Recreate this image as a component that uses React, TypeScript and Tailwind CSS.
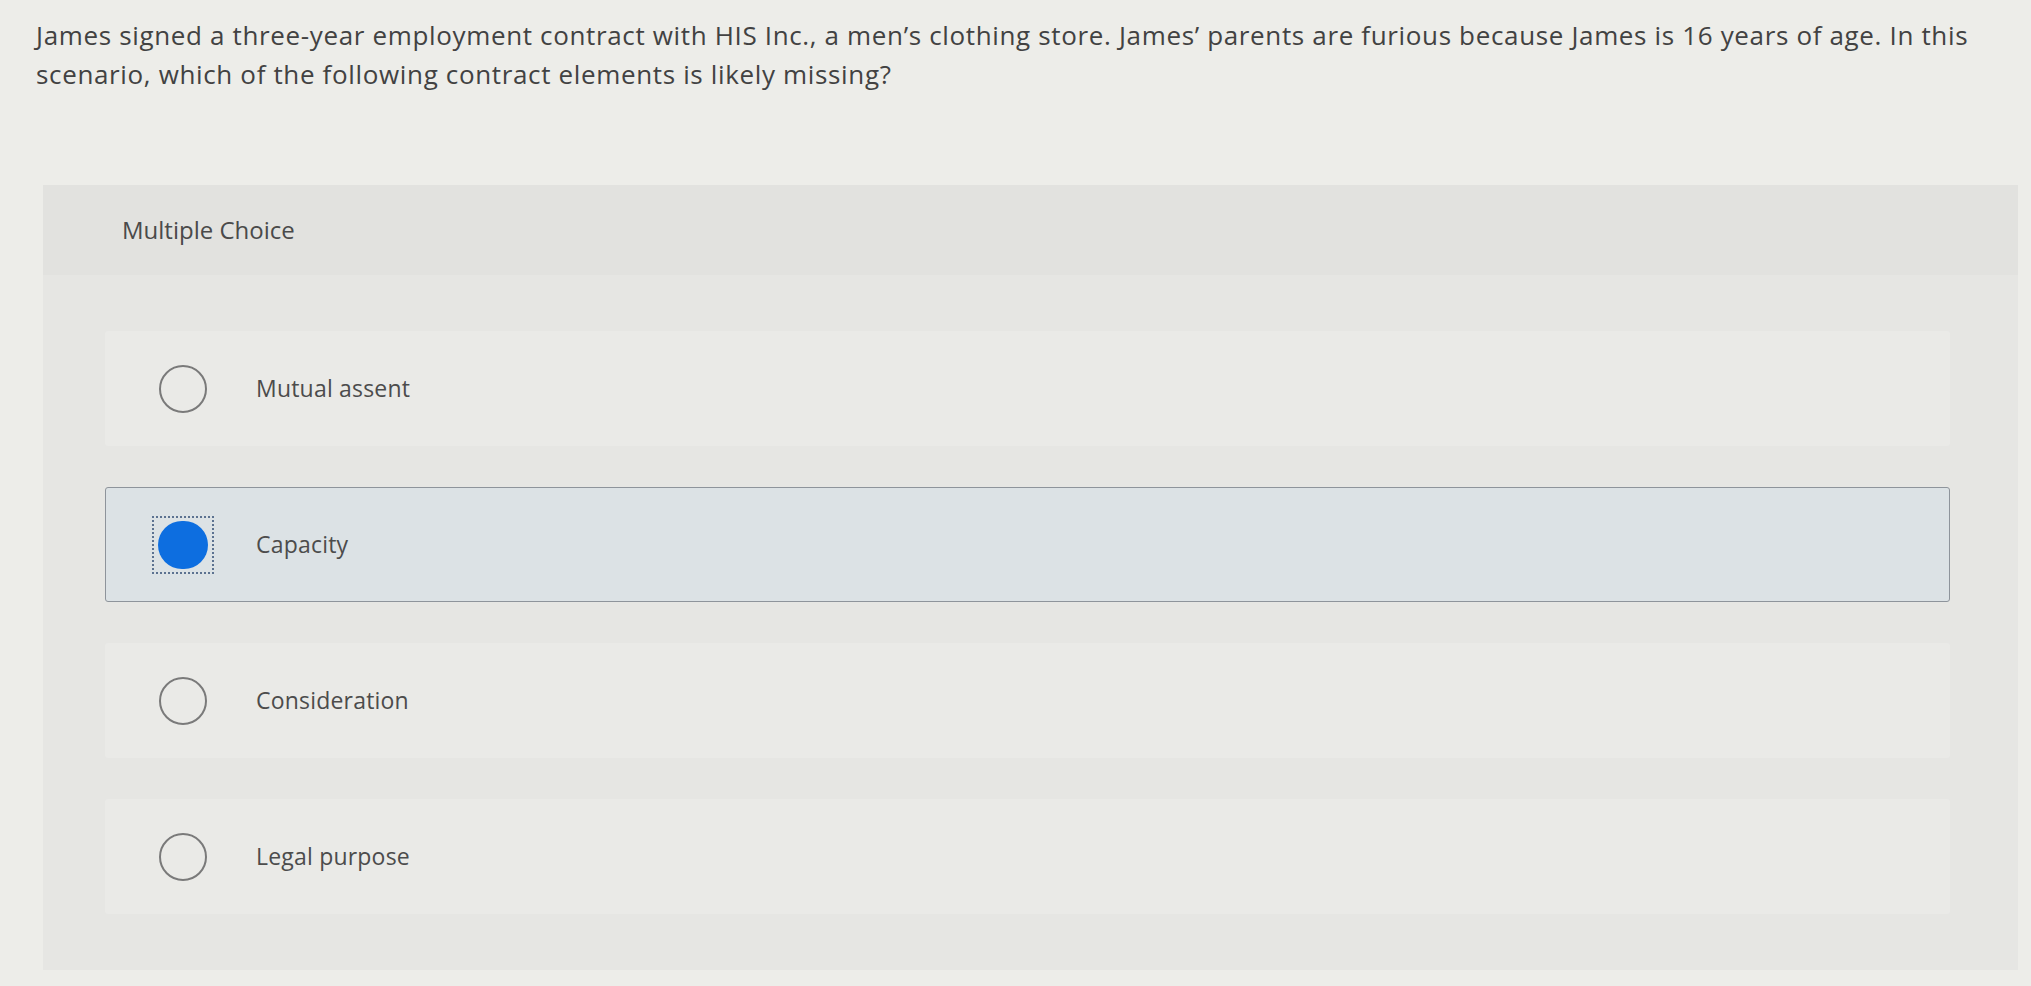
import React from 'react'

const FONT = { fontFamily: '"Open Sans", "Liberation Sans", sans-serif' }

const OPTIONS = [
  { id: 'a', label: 'Mutual assent' },
  { id: 'b', label: 'Capacity' },
  { id: 'c', label: 'Consideration' },
  { id: 'd', label: 'Legal purpose' },
]

export default function App() {
  const selected = 'b'

  return (
    <div className="w-[2031px] h-[986px] overflow-hidden bg-[#edede9] text-[#474747]" style={FONT}>

      {/* question */}
      <div className="pl-[36px] pt-[16px] pr-[20px] text-[26px] leading-[39px] tracking-[0.65px] text-[#424242] whitespace-nowrap">
        James signed a three-year employment contract with HIS Inc., a men’s clothing store. James’ parents are furious because James is 16 years of age. In this
        <br />
        scenario, which of the following contract elements is likely missing?
      </div>

      {/* answer panel */}
      <div className="mt-[91px] ml-[43px] w-[1975px] bg-[#e6e6e3]">
        <div className="h-[90px] flex items-center pl-[79px] bg-[#e2e2df] text-[24px] text-[#4a4a4a]">
          Multiple Choice
        </div>

        <div className="flex flex-col gap-[41px] pt-[56px] pb-[56px] pl-[62px] pr-[68px]">
          {OPTIONS.map((opt) => {
            const active = opt.id === selected
            return (
              <div
                key={opt.id}
                className={`h-[115px] flex items-center rounded-[3px] ${
                  active ? 'bg-[#dce2e5] border border-[#8e949b]' : 'bg-[#eaeae7] border border-transparent'
                }`}
              >
                <div className="w-[150px] flex justify-center pl-[4px]">
                  {active ? (
                    <div className="w-[62px] h-[58px] border-2 border-dotted border-[#5c7290] flex items-center justify-center">
                      <div className="w-[50px] h-[48px] rounded-full bg-[#0d6ee0]" />
                    </div>
                  ) : (
                    <div className="w-[48px] h-[48px] rounded-full border-2 border-[#7a7a7a]" />
                  )}
                </div>
                <span className="text-[23px] tracking-[0.2px] text-[#4c4c4c]">{opt.label}</span>
              </div>
            )
          })}
        </div>
      </div>

    </div>
  )
}
